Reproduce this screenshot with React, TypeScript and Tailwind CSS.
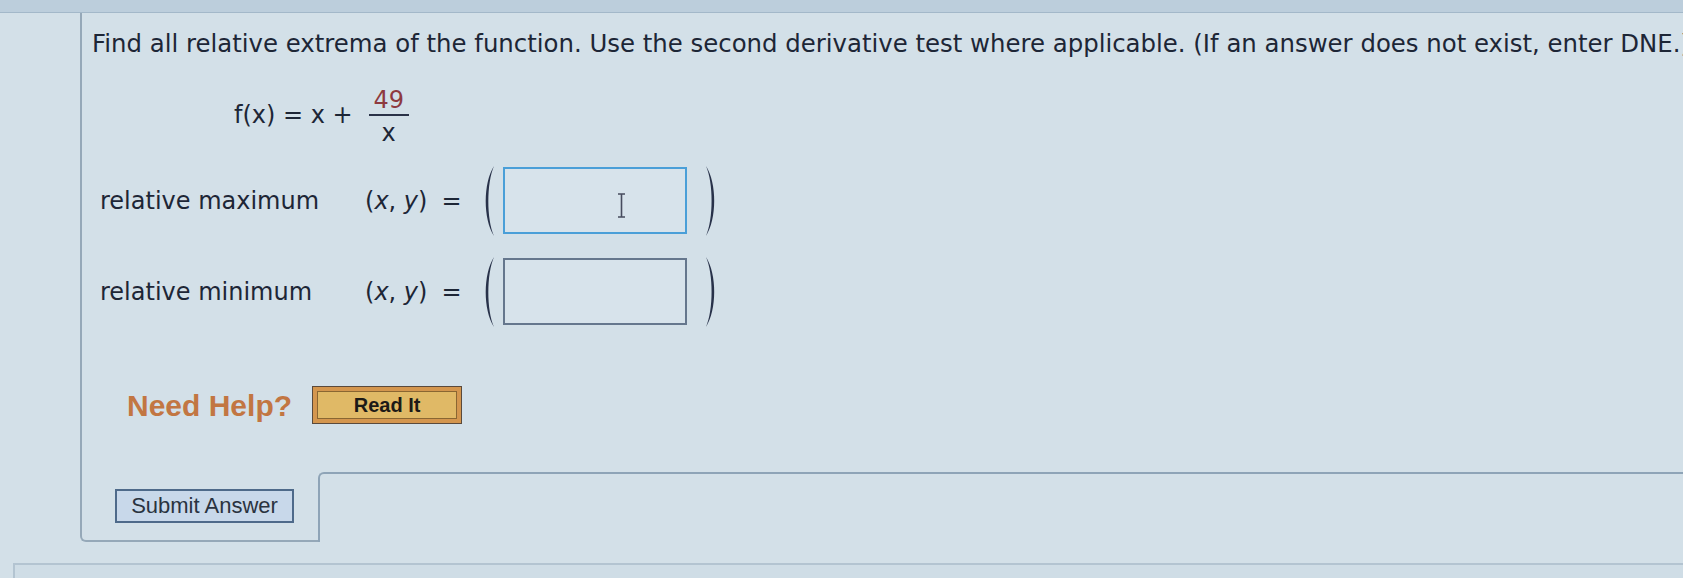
import React from 'react';

const ink = 'text-[#1d2636]';
const body = { fontFamily: '"DejaVu Sans", Verdana, sans-serif' };
const arial = { fontFamily: '"Liberation Sans", Arial, sans-serif' };

function Paren({ right = false }: { right?: boolean }) {
  return (
    <svg width="13" height="72" viewBox="0 0 13 72" className={right ? '-scale-x-100' : ''}>
      <path d="M12 1 C1 18 1 54 12 71 C4.5 54 4.5 18 12 1 Z" fill="#28324a" />
    </svg>
  );
}

function AnswerRow({ label, focused }: { label: string; focused?: boolean }) {
  return (
    <div className="flex items-center h-[67px]">
      <div className={`w-[283px] pl-[18px] text-[24px] ${ink}`}>{label}</div>
      <div className={`w-[117px] text-[24px] ${ink} flex items-center`}>
        <span>
          (<i>x</i>, <i>y</i>)
        </span>
        <span className="ml-[14px]">=</span>
      </div>
      <Paren />
      <div
        className={`relative ml-[8px] w-[184px] h-[67px] bg-[#d7e3eb] ${
          focused ? 'border-2 border-[#4a9fd8]' : 'border-2 border-[#65778d]'
        }`}
      >
        {focused && (
          <svg className="absolute left-[112px] top-[24px]" width="9" height="25" viewBox="0 0 9 25">
            <path d="M1 1 H8 M4.5 1 V24 M1 24 H8" stroke="#474c5e" strokeWidth="1.6" fill="none" />
          </svg>
        )}
      </div>
      <div className="ml-[18px]">
        <Paren right />
      </div>
    </div>
  );
}

export default function App() {
  return (
    <div className="w-[1683px] h-[578px] overflow-hidden bg-[#d3e0e8] flex flex-col" style={body}>
      <div className="h-[13px] shrink-0 bg-[#bccedc] border-b border-[#a3b8c9]" />
      <div className="flex h-[529px] shrink-0">
        <div className="w-[80px] shrink-0" />
        <div className="flex-1 flex flex-col">
          <div className="flex-1 border-l-2 border-[#95a8b8]">
            <p className={`pt-[16px] pl-[10px] text-[24.4px] leading-[30px] whitespace-nowrap ${ink}`}>
              Find all relative extrema of the function. Use the second derivative test where applicable. (If an
              answer does not exist, enter DNE.)
            </p>

            <div className={`mt-[29px] pl-[152px] flex items-center text-[24px] ${ink}`}>
              <span className="pb-[4px]">f(x) = x +</span>
              <span className="ml-[16px] inline-flex flex-col items-center w-[40px]">
                <span className="leading-[24px] text-[#8e3a3f]">49</span>
                <span className="w-full border-t-2 border-[#2a3348] mt-[2px]" />
                <span className="leading-[24px] pt-[5px]">x</span>
              </span>
            </div>

            <div className="mt-[22px]">
              <AnswerRow label="relative maximum" focused />
            </div>
            <div className="mt-[24px]">
              <AnswerRow label="relative minimum" />
            </div>

            <div className="mt-[61px] flex items-center h-[38px] pl-[45px]">
              <span className="text-[30px] font-bold text-[#c27642]" style={arial}>
                Need Help?
              </span>
              <button
                className="ml-[20px] w-[150px] h-[38px] border-[1.5px] border-[#5a4a3c] bg-[#d4964e] p-[4px]"
                style={arial}
              >
                <span className="flex h-full items-center justify-center border border-[#8a6632] bg-[#e0b966] text-[20px] font-bold text-[#1c1a17]">
                  Read It
                </span>
              </button>
            </div>
          </div>

          <div className="flex h-[70px] shrink-0">
            <div className="w-[238px] border-l-2 border-b-2 border-[#95a8b8] rounded-bl-[6px] pt-[17px] pl-[33px]">
              <button
                className="h-[34px] w-[179px] border-2 border-[#4e6a8a] bg-[#c8d8ea] text-[22px] text-[#2a3340] leading-none"
                style={arial}
              >
                Submit Answer
              </button>
            </div>
            <div className="flex-1 border-t-2 border-l-2 border-[#8ea4b7] rounded-tl-[6px]" />
          </div>
        </div>
      </div>
      <div className="h-[21px] shrink-0" />
      <div className="flex-1 ml-[13px] border-t-2 border-l-2 border-[#b3c4d1] bg-[#cfdde6]" />
    </div>
  );
}
